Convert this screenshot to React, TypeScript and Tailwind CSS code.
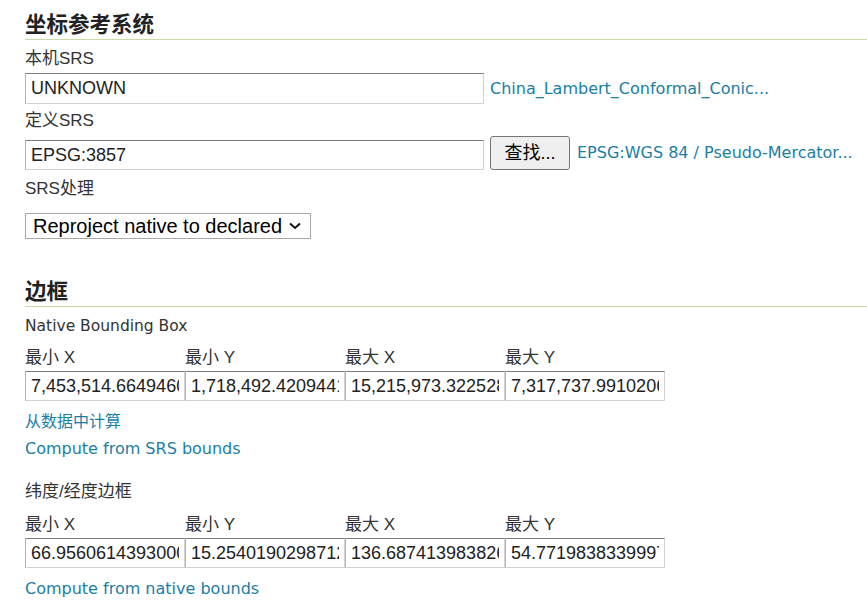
import React from 'react';

const cjk = { fontFamily: '"Liberation Sans", "Noto Sans CJK SC", sans-serif' };
const verdana = { fontFamily: '"DejaVu Sans", "Noto Sans CJK SC", sans-serif' };

const inputCls =
  'block h-full w-full bg-white px-[5px] text-[18px] text-[#222] outline-none border border-t-[#7d7d7d] border-l-[#b5b5b5] border-r-[#d2d2d2] border-b-[#d2d2d2]';

const Heading = ({ children, className }: { children: React.ReactNode; className: string }) => (
  <h2
    className={`h-[29px] border-b border-[#c9dca4] text-[21.5px] font-bold leading-[28px] text-[#222] ${className}`}
    style={cjk}
  >
    {children}
  </h2>
);

const Label = ({ children, className = '' }: { children: React.ReactNode; className?: string }) => (
  <div className={`h-[24px] text-[17px] leading-[24px] text-[#333] ${className}`} style={cjk}>
    {children}
  </div>
);

const Link = ({ children, className = '' }: { children: React.ReactNode; className?: string }) => (
  <a href="#" className={`block w-fit text-[16px] leading-[27px] text-[#1b7ea3] ${className}`} style={verdana}>
    {children}
  </a>
);

const BBox = ({ values }: { values: string[] }) => {
  const labels = ['最小 X', '最小 Y', '最大 X', '最大 Y'];
  return (
    <div>
      <div className="flex">
        {labels.map((l) => (
          <div key={l} className="h-[22px] w-[160px] text-[17px] leading-[22px] text-[#333]" style={cjk}>
            {l}
          </div>
        ))}
      </div>
      <div className="mt-[2px] flex h-[30px]">
        {values.map((v) => (
          <div key={v} className="w-[160px]">
            <input readOnly value={v} className={inputCls} style={cjk} />
          </div>
        ))}
      </div>
    </div>
  );
};

export default function App() {
  return (
    <div className="min-h-[603px] bg-white pl-[25px] pt-px">
      <Heading className="mt-[10px]">坐标参考系统</Heading>

      <Label className="mt-[7px]">本机SRS</Label>
      <div className="mt-[2px] flex h-[31px] items-center gap-[6px]">
        <div className="h-full w-[459px]">
          <input readOnly value="UNKNOWN" className={inputCls} style={cjk} />
        </div>
        <a href="#" className="text-[16px] text-[#1b7ea3]" style={verdana}>
          China_Lambert_Conformal_Conic...
        </a>
      </div>

      <Label className="mt-[5px]">定义SRS</Label>
      <div className="mt-[3px] flex h-[34px] items-end">
        <div className="h-[30px] w-[459px]">
          <input readOnly value="EPSG:3857" className={inputCls} style={cjk} />
        </div>
        <button
          className="ml-[6px] h-[34px] w-[80px] rounded-[3px] border border-[#767676] bg-[#efefef] text-[18px] text-black"
          style={cjk}
        >
          查找...
        </button>
        <a href="#" className="ml-[7px] self-center text-[16px] text-[#1b7ea3]" style={verdana}>
          EPSG:WGS 84 / Pseudo-Mercator...
        </a>
      </div>

      <Label className="mt-[7px]">SRS处理</Label>
      <div className="mt-[12px] flex h-[26px] w-[286px] items-center justify-between border border-[#a9a9a9] bg-white pl-[7px] pr-[9px]">
        <span className="text-[20px] leading-none text-black" style={cjk}>
          Reproject native to declared
        </span>
        <svg width="12" height="8" viewBox="0 0 12 8" fill="none" stroke="#111" strokeWidth="2">
          <polyline points="1,1.5 6,6 11,1.5" />
        </svg>
      </div>

      <Heading className="mt-[39px] border-[#c5e29a]">边框</Heading>

      <div className="mt-[7px] h-[24px] text-[15.5px] leading-[24px] text-[#333]" style={verdana}>
        Native Bounding Box
      </div>
      <div className="mt-[9px]">
        <BBox values={['7,453,514.664946028', '1,718,492.420944113', '15,215,973.32252847', '7,317,737.991020628']} />
      </div>
      <Link className="mt-[7px]">从数据中计算</Link>
      <Link>Compute from SRS bounds</Link>

      <Label className="mt-[18px]">纬度/经度边框</Label>
      <div className="mt-[10px]">
        <BBox values={['66.95606143930006', '15.25401902987125', '136.6874139838266', '54.77198383399977']} />
      </div>
      <Link className="mt-[7px]">Compute from native bounds</Link>
    </div>
  );
}
